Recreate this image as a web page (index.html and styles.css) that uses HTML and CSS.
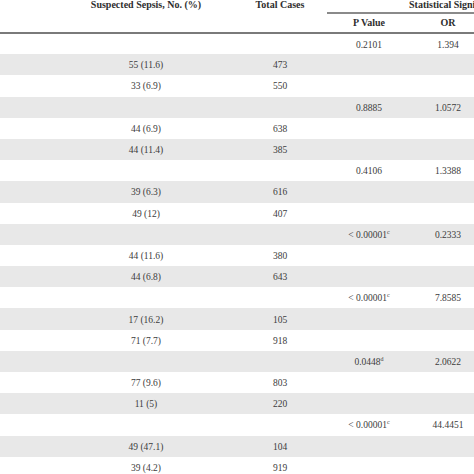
FILE: index.html
```html
<!DOCTYPE html>
<html>
<head>
<meta charset="utf-8">
<link rel="stylesheet" href="styles.css">
</head>
<body>
<div class="crop">
<table class="stats">
  <colgroup>
    <col class="c-label">
    <col class="c-sepsis">
    <col class="c-gap">
    <col class="c-total">
    <col class="c-p">
    <col class="c-or">
  </colgroup>
  <thead>
    <tr class="h1">
      <th></th>
      <th>Suspected Sepsis, No. (%)</th>
      <th></th>
      <th>Total Cases</th>
      <th colspan="2" class="group">Statistical Significance</th>
    </tr>
    <tr class="h2">
      <th></th>
      <th></th>
      <th></th>
      <th></th>
      <th>P Value</th>
      <th>OR</th>
    </tr>
  </thead>
  <tbody>
    <tr><td></td><td></td><td></td><td></td><td>0.2101</td><td>1.394</td></tr>
    <tr><td></td><td>55 (11.6)</td><td></td><td>473</td><td></td><td></td></tr>
    <tr><td></td><td>33 (6.9)</td><td></td><td>550</td><td></td><td></td></tr>
    <tr><td></td><td></td><td></td><td></td><td>0.8885</td><td>1.0572</td></tr>
    <tr><td></td><td>44 (6.9)</td><td></td><td>638</td><td></td><td></td></tr>
    <tr><td></td><td>44 (11.4)</td><td></td><td>385</td><td></td><td></td></tr>
    <tr><td></td><td></td><td></td><td></td><td>0.4106</td><td>1.3388</td></tr>
    <tr><td></td><td>39 (6.3)</td><td></td><td>616</td><td></td><td></td></tr>
    <tr><td></td><td>49 (12)</td><td></td><td>407</td><td></td><td></td></tr>
    <tr><td></td><td></td><td></td><td></td><td>&lt; 0.00001<sup>c</sup></td><td>0.2333</td></tr>
    <tr><td></td><td>44 (11.6)</td><td></td><td>380</td><td></td><td></td></tr>
    <tr><td></td><td>44 (6.8)</td><td></td><td>643</td><td></td><td></td></tr>
    <tr><td></td><td></td><td></td><td></td><td>&lt; 0.00001<sup>c</sup></td><td>7.8585</td></tr>
    <tr><td></td><td>17 (16.2)</td><td></td><td>105</td><td></td><td></td></tr>
    <tr><td></td><td>71 (7.7)</td><td></td><td>918</td><td></td><td></td></tr>
    <tr><td></td><td></td><td></td><td></td><td>0.0448<sup>d</sup></td><td>2.0622</td></tr>
    <tr><td></td><td>77 (9.6)</td><td></td><td>803</td><td></td><td></td></tr>
    <tr><td></td><td>11 (5)</td><td></td><td>220</td><td></td><td></td></tr>
    <tr><td></td><td></td><td></td><td></td><td>&lt; 0.00001<sup>c</sup></td><td>44.4451</td></tr>
    <tr><td></td><td>49 (47.1)</td><td></td><td>104</td><td></td><td></td></tr>
    <tr><td></td><td>39 (4.2)</td><td></td><td>919</td><td></td><td></td></tr>
  </tbody>
</table>
</div>
</body>
</html>
```

FILE: styles.css
```css
html, body {
  margin: 0;
  padding: 0;
  background: #ffffff;
}

.crop {
  width: 474px;
  height: 474px;
  overflow: hidden;
}

.stats {
  border-collapse: collapse;
  table-layout: fixed;
  width: 485px;
  font-family: "Liberation Serif", "DejaVu Serif", serif;
  color: #3c3c3c;
  font-size: 9.5px;
}

.c-label { width: 90px; }
.c-sepsis { width: 112px; }
.c-gap { width: 31px; }
.c-total { width: 94px; }
.c-p { width: 84px; }
.c-or { width: 74px; }

.stats th,
.stats td {
  padding: 0;
  text-align: center;
  white-space: nowrap;
}

.stats th {
  font-weight: bold;
  color: #2e2e2e;
  font-size: 10px;
}

.h1 th {
  height: 12px;
  line-height: 10px;
  vertical-align: top;
}

.h1 th.group {
  text-align: left;
  padding-left: 82px;
  border-bottom: 2px solid #8a8a8a;
}

.h2 th {
  height: 18px;
  line-height: 12px;
  vertical-align: middle;
  border-bottom: 2px solid #7a7a7a;
}

.stats tbody tr {
  height: 21.2px;
}

.stats tbody td {
  line-height: 12px;
  padding-top: 1px;
  vertical-align: middle;
}

.stats tbody tr:nth-child(even) {
  background: #e8e8e8;
}

.stats sup {
  font-size: 6px;
  line-height: 0;
  vertical-align: 4px;
}
```
